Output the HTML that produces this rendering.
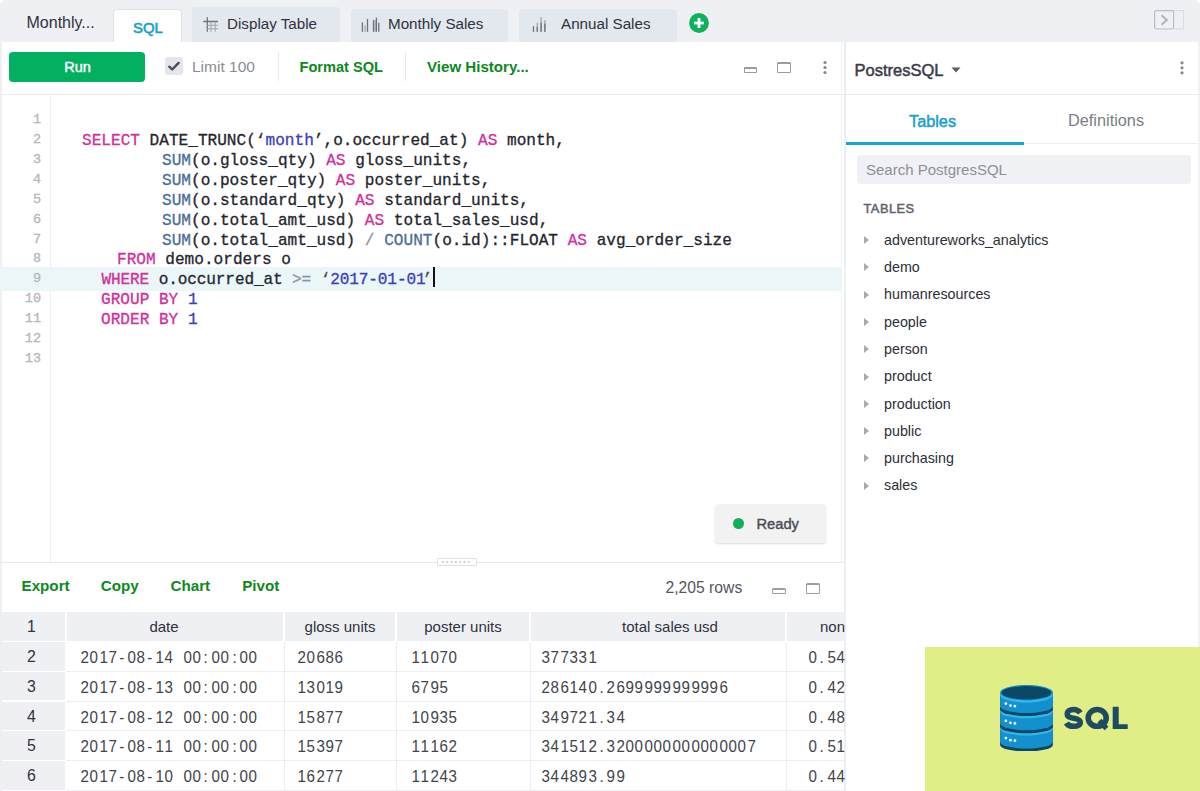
<!DOCTYPE html>
<html><head><meta charset="utf-8">
<style>
*{box-sizing:border-box;margin:0;padding:0}
html,body{width:1200px;height:791px;overflow:hidden;background:#fff}
body{position:relative;font-family:"Liberation Sans",sans-serif;color:#2f3140}
.a{position:absolute;white-space:pre}
#topbar{position:absolute;left:0;top:0;width:1200px;height:42px;background:#eff0f4;border-top-left-radius:6px;border-top-right-radius:6px}
.tab{position:absolute;top:8px;height:34px;background:#e3e7ee;border-radius:4px 4px 0 0}
.tabt{position:absolute;font-size:15.2px;color:#30323d;top:15px}
.mono{font-family:"Liberation Mono",monospace}
.code{position:absolute;font-family:"Liberation Mono",monospace;font-size:16.1px;color:#24262e;-webkit-text-stroke:0.3px currentColor;white-space:pre;line-height:20px}
.kw{color:#d0309a}
.fn{color:#4a6e9a}
.st{color:#3a3ec0}
.op{color:#8a94a6}
.ln{position:absolute;left:0;width:41px;text-align:right;font-family:"Liberation Mono",monospace;font-size:13.5px;color:#b3b6be;line-height:20px;-webkit-text-stroke:0.3px #b3b6be}
.green{color:#0b891d;font-weight:700}
.gm{color:#0b891d;font-size:15.2px;font-weight:700}
.tree{position:absolute;left:884px;font-size:14.3px;color:#2c2e38}
.tri{position:absolute;left:864px;width:0;height:0;border-top:4.4px solid transparent;border-bottom:4.4px solid transparent;border-left:5.2px solid #a7a9b5}
.hdr{position:absolute;top:612px;height:29px;background:#eff0f4;font-size:15px;color:#30323d;line-height:29px;text-align:center}
.cell{position:absolute;font-family:"Liberation Sans",sans-serif;font-size:16.1px;color:#42444b;white-space:nowrap}
.cell i{font-style:normal;display:inline-block;width:9.35px;text-align:center;transform:scaleX(0.94)}
.idx{position:absolute;left:0;width:65px;padding-right:2px;background:#eff0f4;font-size:15.8px;color:#30323d;text-align:center}
</style></head><body>
<div id="topbar"></div>
<!-- tabs -->
<div class="tabt" style="left:26.5px;top:14.3px;font-size:16px">Monthly...</div>
<div class="tab" style="left:113px;top:9px;width:69px;height:36px;background:#fff;border:1px solid #dfe2e6;border-bottom:none"></div>
<div class="tabt" style="left:133px;top:19.5px;font-size:14.9px;color:#14a2c9;-webkit-text-stroke:0.6px #14a2c9">SQL</div>
<div class="tab" style="left:192px;top:7px;width:148px;height:35px"></div>
<div class="tabt" style="left:227px">Display Table</div>
<div class="tab" style="left:351px;top:9px;width:157px;height:33px"></div>
<div class="tabt" style="left:388px">Monthly Sales</div>
<div class="tab" style="left:519px;top:9px;width:158px;height:33px"></div>
<div class="tabt" style="left:561px">Annual Sales</div>
<svg class="a" style="left:689px;top:13.3px" width="20" height="20" viewBox="0 0 20 20"><circle cx="10" cy="10" r="9.9" fill="#0fb25c"/><rect x="5" y="8.6" width="10" height="2.8" fill="#fff"/><rect x="8.6" y="5" width="2.8" height="10" fill="#fff"/></svg>

<svg class="a" style="left:200px;top:14px" width="22" height="20" viewBox="200 14 22 20"><path d="M207.3,17.2V31.8M203.3,21.5H218" stroke="#6e717a" stroke-width="1.3" fill="none"/><path d="M211,21.5V31.8M215.2,21.5V31.8M207.3,25.3H218M207.3,28.8H218" stroke="#a3a6ae" stroke-width="1" fill="none"/></svg>
<svg class="a" style="left:355px;top:14px" width="30" height="20" viewBox="355 14 30 20"><rect x="361.75" y="22.5" width="1.3" height="9.3" fill="#6e717a"/><rect x="364.45000000000005" y="25.2" width="1.3" height="6.600000000000001" fill="#a3a6ae"/><rect x="366.85" y="18.9" width="1.3" height="12.900000000000002" fill="#6e717a"/><rect x="372.85" y="20.1" width="1.3" height="11.7" fill="#6e717a"/><rect x="374.35" y="20" width="1.3" height="11.8" fill="#a3a6ae"/><rect x="375.75" y="17.6" width="1.3" height="14.2" fill="#6e717a"/><rect x="378.15000000000003" y="22.7" width="1.3" height="9.100000000000001" fill="#6e717a"/></svg>
<svg class="a" style="left:525px;top:14px" width="30" height="20" viewBox="525 14 30 20"><rect x="532.85" y="26.1" width="1.3" height="5.699999999999999" fill="#6e717a"/><rect x="536.65" y="22.7" width="1.3" height="9.100000000000001" fill="#a3a6ae"/><rect x="536.65" y="27" width="1.3" height="4.800000000000001" fill="#6e717a"/><rect x="540.45" y="17" width="1.3" height="14.8" fill="#a3a6ae"/><rect x="540.45" y="22.7" width="1.3" height="9.100000000000001" fill="#6e717a"/><rect x="544.25" y="20" width="1.3" height="11.8" fill="#a3a6ae"/><rect x="544.25" y="23.6" width="1.3" height="8.2" fill="#6e717a"/></svg>
<svg class="a" style="left:1150px;top:6px" width="40" height="28" viewBox="1150 6 40 28"><rect x="1154.6" y="10.6" width="19" height="18.4" rx="1.5" fill="none" stroke="#b9bcc2" stroke-width="1.2"/><path d="M1173.6,10.6H1183.6V29H1173.6" fill="none" stroke="#cdd0d4" stroke-width="1" stroke-dasharray="1.5 0.7"/><path d="M1161.5,15.3L1166.8,20L1161.5,24.7" fill="none" stroke="#aeb6b6" stroke-width="2"/></svg>
<!-- main panel -->
<div class="a" style="left:0;top:42px;width:845px;height:749px;background:#fff"></div>
<div class="a" style="left:844px;top:42px;width:2px;height:749px;background:#eceef1"></div><div class="a" style="left:841px;top:42px;width:1px;height:520px;background:#f3f4f6"></div>
<div class="a" style="left:0;top:93.5px;width:1200px;height:1.2px;background:#e8eaed"></div>

<div class="a" style="left:0;top:42px;width:1.5px;height:749px;background:#eef0f2"></div>
<!-- toolbar -->
<div class="a" style="left:9px;top:52px;width:136px;height:30px;background:#02b05f;border-radius:4px;color:#fff;font-size:14.5px;-webkit-text-stroke:0.45px #fff;text-align:center;line-height:30px;padding-left:1px">Run</div>
<div class="a" style="left:165px;top:57px;width:18px;height:18px;background:#e3e6ec;border-radius:3px"></div>
<div class="a" style="left:192px;top:58px;font-size:15.5px;color:#8a8d96">Limit 100</div>
<div class="a" style="left:278px;top:52px;width:1px;height:29px;background:#e6e8ec"></div>
<div class="a green" style="left:299.5px;top:58.5px;font-size:14.6px">Format SQL</div>
<div class="a" style="left:405px;top:52px;width:1px;height:29px;background:#e6e8ec"></div>
<div class="a green" style="left:427px;top:58.3px;font-size:15.1px">View History...</div>

<svg class="a" style="left:165px;top:57px" width="19" height="19" viewBox="165 57 19 19"><path d="M169.3,66.7L172.2,69.5L178.6,62.9" stroke="#4a4c55" stroke-width="2.4" fill="none" stroke-linecap="round" stroke-linejoin="round"/></svg>
<div class="a" style="left:744px;top:67px;width:13px;height:6px;border:1.3px solid #9a9ca4;border-top-width:2px;border-radius:1px"></div>
<div class="a" style="left:777px;top:62px;width:14px;height:11px;border:1.3px solid #9a9ca4;border-top-width:2.5px;border-radius:1.5px"></div>
<svg class="a" style="left:820px;top:58px" width="10" height="20" viewBox="820 58 10 20"><circle cx="825" cy="62.5" r="1.6" fill="#7d8c8a"/><circle cx="825" cy="67.5" r="1.6" fill="#7d8c8a"/><circle cx="825" cy="72.5" r="1.6" fill="#7d8c8a"/></svg>
<!-- editor gutter -->
<div class="a" style="left:50px;top:95px;width:1px;height:467px;background:#eceef1"></div>
<div class="a" style="left:0;top:267px;width:841px;height:24px;background:#ebf6f8"></div>

<div class="ln" style="top:110px">1</div>
<div class="ln" style="top:130px">2</div>
<div class="ln" style="top:150px">3</div>
<div class="ln" style="top:170px">4</div>
<div class="ln" style="top:190px">5</div>
<div class="ln" style="top:210px">6</div>
<div class="ln" style="top:230px">7</div>
<div class="ln" style="top:249px">8</div>
<div class="ln" style="top:269px">9</div>
<div class="ln" style="top:289px">10</div>
<div class="ln" style="top:309px">11</div>
<div class="ln" style="top:329px">12</div>
<div class="ln" style="top:349px">13</div>

<div class="code" style="left:82px;top:130.8px"><span class="kw">SELECT</span> DATE_TRUNC(‘<span class="st">month</span>’,o.occurred_at) <span class="kw">AS</span> month,</div>
<div class="code" style="left:162px;top:150.8px"><span class="fn">SUM</span>(o.gloss_qty) <span class="kw">AS</span> gloss_units,</div>
<div class="code" style="left:162px;top:170.8px"><span class="fn">SUM</span>(o.poster_qty) <span class="kw">AS</span> poster_units,</div>
<div class="code" style="left:162px;top:190.8px"><span class="fn">SUM</span>(o.standard_qty) <span class="kw">AS</span> standard_units,</div>
<div class="code" style="left:162px;top:210.8px"><span class="fn">SUM</span>(o.total_amt_usd) <span class="kw">AS</span> total_sales_usd,</div>
<div class="code" style="left:162px;top:230.8px"><span class="fn">SUM</span>(o.total_amt_usd) <span class="op">/</span> <span class="fn">COUNT</span>(o.id)::FLOAT <span class="kw">AS</span> avg_order_size</div>
<div class="code" style="left:117px;top:249.8px"><span class="kw">FROM</span> demo.orders o</div>
<div class="code" style="left:101.5px;top:269.8px;letter-spacing:-0.13px"><span class="kw">WHERE</span> o.occurred_at <span class="op">&gt;=</span> <span style="color:#4a4c55">‘</span><span class="st">2017-01-01</span><span style="position:relative;left:-3px;color:#4a4c55">’</span></div><div class="a" style="left:433px;top:267px;width:2px;height:20px;background:#111"></div>
<div class="code" style="left:101px;top:289.8px"><span class="kw">GROUP BY</span> <span class="st">1</span></div>
<div class="code" style="left:101px;top:309.8px"><span class="kw">ORDER BY</span> <span class="st">1</span></div>

<!-- ready -->
<div class="a" style="left:715px;top:504px;width:111px;height:39px;background:#f2f2f2;border-radius:4px;box-shadow:0 1px 2px rgba(0,0,0,0.14)"></div>
<div class="a" style="left:732.5px;top:517.8px;width:11.6px;height:11.6px;border-radius:50%;background:#10b05a"></div>
<div class="a" style="left:756.5px;top:515.5px;font-size:14.7px;color:#4a4c55;-webkit-text-stroke:0.4px #4a4c55">Ready</div>

<div class="a" style="left:0;top:562px;width:845px;height:1px;background:#e6e8ec"></div><div class="a" style="left:437px;top:558px;width:40px;height:8px;background:#fff;border:1px solid #dfe2e5;border-radius:1px"></div><svg class="a" style="left:437px;top:558px" width="40" height="8" viewBox="0 0 40 8"><circle cx="6.0" cy="4" r="1.1" fill="#c9ccd0"/><circle cx="10.3" cy="4" r="1.1" fill="#c9ccd0"/><circle cx="14.6" cy="4" r="1.1" fill="#c9ccd0"/><circle cx="18.9" cy="4" r="1.1" fill="#c9ccd0"/><circle cx="23.2" cy="4" r="1.1" fill="#c9ccd0"/><circle cx="27.5" cy="4" r="1.1" fill="#c9ccd0"/><circle cx="31.8" cy="4" r="1.1" fill="#c9ccd0"/></svg><div class="a" style="left:772px;top:588px;width:14px;height:6px;border:1.3px solid #9c9ea6;border-top-width:2px;border-radius:1.5px"></div><div class="a" style="left:806px;top:583px;width:13.5px;height:11px;border:1.3px solid #9c9ea6;border-top-width:2.5px;border-radius:1.5px"></div>

<!-- results toolbar -->
<div class="a gm" style="left:21.5px;top:576.9px">Export</div>
<div class="a gm" style="left:100.8px;top:576.9px">Copy</div>
<div class="a gm" style="left:170.5px;top:576.9px">Chart</div>
<div class="a gm" style="left:242.2px;top:576.9px">Pivot</div>
<div class="a" style="left:665.5px;top:578.5px;font-size:15.7px;color:#55575f">2,205 rows</div>

<!-- table -->
<div class="idx" style="top:612px;height:29px;line-height:29px">1</div>
<div class="hdr" style="left:67px;width:216px;padding-right:22px">date</div>
<div class="hdr" style="left:285px;width:110px">gloss units</div>
<div class="hdr" style="left:397px;width:132px">poster units</div>
<div class="hdr" style="left:531px;width:254px;padding-left:24px">total sales usd</div>
<div class="hdr" style="left:787px;width:58px;text-align:left;padding-left:33px">non</div>

<!-- sidebar -->
<div class="a" style="left:854.5px;top:60.5px;font-size:16.5px;color:#3a3c48;-webkit-text-stroke:0.5px #3a3c48">PostresSQL</div><svg class="a" style="left:1177px;top:58px" width="10" height="20" viewBox="1177 58 10 20"><circle cx="1182" cy="62.8" r="1.6" fill="#7d8c8a"/><circle cx="1182" cy="67.8" r="1.6" fill="#7d8c8a"/><circle cx="1182" cy="72.8" r="1.6" fill="#7d8c8a"/></svg><svg class="a" style="left:950px;top:66px" width="12" height="8" viewBox="0 0 12 8"><path d="M1.5,1.5H10.5L6,6.5Z" fill="#5a5c66"/></svg>
<div class="a" style="left:1024px;top:142px;width:0;height:0"></div>
<div class="a" style="left:846px;top:141.5px;width:178px;height:3px;background:#14a4cc"></div>
<div class="a" style="left:1024px;top:143px;width:176px;height:1px;background:#eceef1"></div>
<div class="a" style="left:909px;top:111.5px;font-size:16.3px;color:#1a9fce;-webkit-text-stroke:0.5px #1a9fce">Tables</div>
<div class="a" style="left:1068px;top:111px;font-size:16.3px;color:#7b7e86">Definitions</div>
<div class="a" style="left:857px;top:155px;width:334px;height:29px;background:#f0f1f4;border-radius:4px"></div>
<div class="a" style="left:866px;top:161px;font-size:15px;color:#8c8f96">Search PostgresSQL</div>
<div class="a" style="left:863.5px;top:201px;font-size:13px;color:#60636c;letter-spacing:0.5px;-webkit-text-stroke:0.5px #60636c;font-size:12.8px">TABLES</div>

<div class="tri" style="top:236px"></div><div class="tree" style="top:231.5px">adventureworks_analytics</div>
<div class="tri" style="top:263px"></div><div class="tree" style="top:258.5px">demo</div>
<div class="tri" style="top:290.5px"></div><div class="tree" style="top:286px">humanresources</div>
<div class="tri" style="top:318px"></div><div class="tree" style="top:313.5px">people</div>
<div class="tri" style="top:345px"></div><div class="tree" style="top:340.5px">person</div>
<div class="tri" style="top:372.5px"></div><div class="tree" style="top:368px">product</div>
<div class="tri" style="top:400px"></div><div class="tree" style="top:395.5px">production</div>
<div class="tri" style="top:427px"></div><div class="tree" style="top:422.5px">public</div>
<div class="tri" style="top:454px"></div><div class="tree" style="top:449.5px">purchasing</div>
<div class="tri" style="top:481.5px"></div><div class="tree" style="top:477px">sales</div>
<div class="idx" style="top:642px;height:28.8px;line-height:30.8px">2</div>
<div class="a" style="left:66px;top:670.8px;width:779px;height:1px;background:#eceef1"></div>
<div class="cell" style="left:80px;top:648.2px"><i>2</i><i>0</i><i>1</i><i>7</i><i>-</i><i>0</i><i>8</i><i>-</i><i>1</i><i>4</i><i> </i><i>0</i><i>0</i><i>:</i><i>0</i><i>0</i><i>:</i><i>0</i><i>0</i></div>
<div class="cell" style="left:297px;top:648.2px"><i>2</i><i>0</i><i>6</i><i>8</i><i>6</i></div>
<div class="cell" style="left:411px;top:648.2px"><i>1</i><i>1</i><i>0</i><i>7</i><i>0</i></div>
<div class="cell" style="left:541px;top:648.2px"><i>3</i><i>7</i><i>7</i><i>3</i><i>3</i><i>1</i></div>
<div class="cell" style="left:808px;top:648.2px"><i>0</i><i>.</i><i>5</i><i>4</i></div>
<div class="idx" style="top:671.8px;height:28.7px;line-height:30.7px">3</div>
<div class="a" style="left:66px;top:700.5px;width:779px;height:1px;background:#eceef1"></div>
<div class="cell" style="left:80px;top:678px"><i>2</i><i>0</i><i>1</i><i>7</i><i>-</i><i>0</i><i>8</i><i>-</i><i>1</i><i>3</i><i> </i><i>0</i><i>0</i><i>:</i><i>0</i><i>0</i><i>:</i><i>0</i><i>0</i></div>
<div class="cell" style="left:297px;top:678px"><i>1</i><i>3</i><i>0</i><i>1</i><i>9</i></div>
<div class="cell" style="left:411px;top:678px"><i>6</i><i>7</i><i>9</i><i>5</i></div>
<div class="cell" style="left:541px;top:678px"><i>2</i><i>8</i><i>6</i><i>1</i><i>4</i><i>0</i><i>.</i><i>2</i><i>6</i><i>9</i><i>9</i><i>9</i><i>9</i><i>9</i><i>9</i><i>9</i><i>9</i><i>9</i><i>9</i><i>6</i></div>
<div class="cell" style="left:808px;top:678px"><i>0</i><i>.</i><i>4</i><i>2</i></div>
<div class="idx" style="top:701.5px;height:28.7px;line-height:30.7px">4</div>
<div class="a" style="left:66px;top:730.2px;width:779px;height:1px;background:#eceef1"></div>
<div class="cell" style="left:80px;top:707.7px"><i>2</i><i>0</i><i>1</i><i>7</i><i>-</i><i>0</i><i>8</i><i>-</i><i>1</i><i>2</i><i> </i><i>0</i><i>0</i><i>:</i><i>0</i><i>0</i><i>:</i><i>0</i><i>0</i></div>
<div class="cell" style="left:297px;top:707.7px"><i>1</i><i>5</i><i>8</i><i>7</i><i>7</i></div>
<div class="cell" style="left:411px;top:707.7px"><i>1</i><i>0</i><i>9</i><i>3</i><i>5</i></div>
<div class="cell" style="left:541px;top:707.7px"><i>3</i><i>4</i><i>9</i><i>7</i><i>2</i><i>1</i><i>.</i><i>3</i><i>4</i></div>
<div class="cell" style="left:808px;top:707.7px"><i>0</i><i>.</i><i>4</i><i>8</i></div>
<div class="idx" style="top:731.2px;height:28.8px;line-height:30.8px">5</div>
<div class="a" style="left:66px;top:760px;width:779px;height:1px;background:#eceef1"></div>
<div class="cell" style="left:80px;top:737.4px"><i>2</i><i>0</i><i>1</i><i>7</i><i>-</i><i>0</i><i>8</i><i>-</i><i>1</i><i>1</i><i> </i><i>0</i><i>0</i><i>:</i><i>0</i><i>0</i><i>:</i><i>0</i><i>0</i></div>
<div class="cell" style="left:297px;top:737.4px"><i>1</i><i>5</i><i>3</i><i>9</i><i>7</i></div>
<div class="cell" style="left:411px;top:737.4px"><i>1</i><i>1</i><i>1</i><i>6</i><i>2</i></div>
<div class="cell" style="left:541px;top:737.4px"><i>3</i><i>4</i><i>1</i><i>5</i><i>1</i><i>2</i><i>.</i><i>3</i><i>2</i><i>0</i><i>0</i><i>0</i><i>0</i><i>0</i><i>0</i><i>0</i><i>0</i><i>0</i><i>0</i><i>0</i><i>0</i><i>0</i><i>7</i></div>
<div class="cell" style="left:808px;top:737.4px"><i>0</i><i>.</i><i>5</i><i>1</i></div>
<div class="idx" style="top:761px;height:28.5px;line-height:30.5px">6</div>
<div class="a" style="left:66px;top:789.5px;width:779px;height:1px;background:#eceef1"></div>
<div class="cell" style="left:80px;top:767.2px"><i>2</i><i>0</i><i>1</i><i>7</i><i>-</i><i>0</i><i>8</i><i>-</i><i>1</i><i>0</i><i> </i><i>0</i><i>0</i><i>:</i><i>0</i><i>0</i><i>:</i><i>0</i><i>0</i></div>
<div class="cell" style="left:297px;top:767.2px"><i>1</i><i>6</i><i>2</i><i>7</i><i>7</i></div>
<div class="cell" style="left:411px;top:767.2px"><i>1</i><i>1</i><i>2</i><i>4</i><i>3</i></div>
<div class="cell" style="left:541px;top:767.2px"><i>3</i><i>4</i><i>4</i><i>8</i><i>9</i><i>3</i><i>.</i><i>9</i><i>9</i></div>
<div class="cell" style="left:808px;top:767.2px"><i>0</i><i>.</i><i>4</i><i>4</i></div>
<div class="a" style="left:284px;top:642px;width:1px;height:149px;background:#eceef1"></div>
<div class="a" style="left:396px;top:642px;width:1px;height:149px;background:#eceef1"></div>
<div class="a" style="left:529.5px;top:642px;width:1px;height:149px;background:#eceef1"></div>
<div class="a" style="left:785.5px;top:642px;width:1px;height:149px;background:#eceef1"></div>
<div class="a" style="left:1198px;top:42px;width:2px;height:605px;background:#f1f2f4"></div>
<!-- logo box -->
<div class="a" style="left:925px;top:647px;width:275px;height:144px;background:#e1ee85"></div>
<svg class="a" style="left:1000px;top:685px" width="53" height="66" viewBox="0 -0.5 52 65"><path d="M0,40.5 L0,58.5 A26,6.5 0 0 0 52,58.5 L52,40.5 Z" fill="#0b4866"/><path d="M0,40.5 L0,55.5 A26,6.5 0 0 0 52,55.5 L52,40.5 Z" fill="#1590cf"/><ellipse cx="26" cy="42.7" rx="26" ry="6.5" fill="#2fb8ef"/><ellipse cx="26" cy="40.0" rx="26" ry="6.5" fill="#1590cf"/><path d="M0,23.5 L0,40.5 A26,6.5 0 0 0 52,40.5 L52,23.5 Z" fill="#0b4866"/><path d="M0,23.5 L0,37.5 A26,6.5 0 0 0 52,37.5 L52,23.5 Z" fill="#1590cf"/><ellipse cx="26" cy="25.7" rx="26" ry="6.5" fill="#2fb8ef"/><ellipse cx="26" cy="23.0" rx="26" ry="6.5" fill="#1590cf"/><path d="M0,7.5 L0,23.5 A26,6.5 0 0 0 52,23.5 L52,7.5 Z" fill="#0b4866"/><path d="M0,7.5 L0,20.5 A26,6.5 0 0 0 52,20.5 L52,7.5 Z" fill="#1590cf"/><ellipse cx="26" cy="9.3" rx="26" ry="7.5" fill="#2fb8ef"/><ellipse cx="26" cy="6.9" rx="26" ry="7.5" fill="#1590cf"/><ellipse cx="26" cy="7.2" rx="24.5" ry="6.6" fill="#0b4866"/><circle cx="5.7" cy="17.8" r="1.35" fill="#fff"/><circle cx="10.2" cy="19.8" r="1.35" fill="#fff"/><circle cx="14.6" cy="20.3" r="1.35" fill="#fff"/><circle cx="5.7" cy="34.8" r="1.35" fill="#fff"/><circle cx="10.2" cy="36.8" r="1.35" fill="#fff"/><circle cx="14.6" cy="37.3" r="1.35" fill="#fff"/><circle cx="5.7" cy="51.8" r="1.35" fill="#fff"/><circle cx="10.2" cy="53.8" r="1.35" fill="#fff"/><circle cx="14.6" cy="54.3" r="1.35" fill="#fff"/></svg><svg class="a" style="left:1055px;top:700px" width="80" height="36" viewBox="1055 700 80 36"><path d="M1080.3,712.8 C1078.8,710.6 1076.3,709.5 1073.5,709.5 C1069.6,709.5 1067.2,711.3 1067.2,714 C1067.2,717.1 1069.9,717.7 1073.6,718.2 C1077.6,718.8 1080.3,719.8 1080.3,722.5 C1080.3,725 1077.8,726.3 1073.5,726.3 C1070,726.3 1067.6,725.1 1066.4,723" fill="none" stroke="#1e4a63" stroke-width="5.6"/><ellipse cx="1097.2" cy="717.9" rx="9" ry="8.4" fill="none" stroke="#1e4a63" stroke-width="5.6"/><path d="M1099.5,720.5L1106.5,728.5" stroke="#1e4a63" stroke-width="5.2"/><path d="M1112.7,706.7H1118.7V724.3H1127.7V729H1112.7Z" fill="#1e4a63"/></svg>
</body></html>
